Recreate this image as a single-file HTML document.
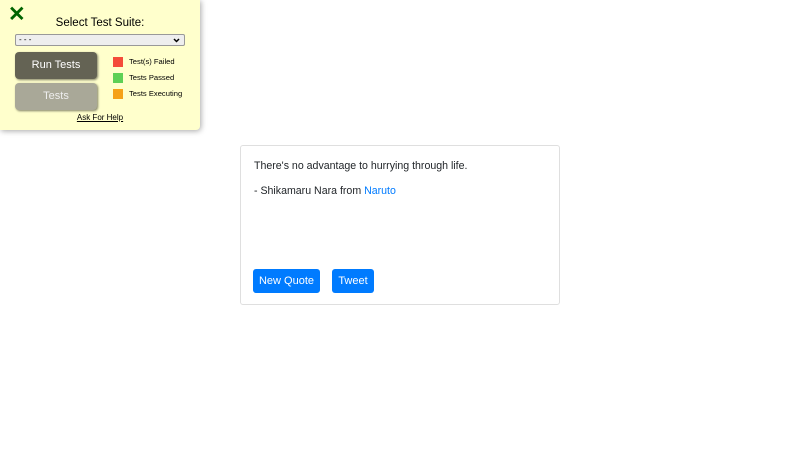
<!DOCTYPE html>
<html><head><meta charset="utf-8"><style>
*{box-sizing:border-box}
body{margin:0;width:800px;height:450px;background:#fff;font-family:"Liberation Sans",sans-serif;position:relative;overflow:hidden}
#panel{position:absolute;left:0;top:0;width:200px;height:130px;background:#ffffcc;box-shadow:1px 1px 6px rgba(0,0,0,.35);border-bottom-right-radius:4px}
.x{position:absolute;left:8px;top:4px;font-size:21px;font-weight:bold;color:#006400;line-height:21px}
.title{position:absolute;left:0;width:200px;top:17px;text-align:center;font-size:11.5px;color:#000}
.sel{position:absolute;left:15px;top:34px;width:170px;height:12px;border:1px solid #999;background:#eee;font-size:8px;line-height:10px;padding-left:3px;border-radius:2px}
.sel svg{position:absolute;right:4px;top:3px}
.btn{position:absolute;left:15px;width:82px;height:27px;border-radius:4px;color:#fff;font-size:11px;text-align:center;line-height:27px;box-shadow:1px 1px 2px rgba(0,0,0,.5)}
.b1{top:52px;background:#646354}
.b2{top:83px;background:#a9a898;color:#eee}
.leg{position:absolute;left:113px;font-size:7.6px;color:#000;line-height:10px}
.leg i{display:inline-block;width:10px;height:10px;vertical-align:middle;margin-right:6px}
.help{position:absolute;left:0;width:200px;top:113px;text-align:center;font-size:8px;text-decoration:underline}
#card{position:absolute;left:240px;top:145px;width:320px;height:160px;border:1px solid #dfdfdf;border-radius:3px;font-family:"Liberation Sans",sans-serif;font-size:10.6px;color:#212529}
#card p{position:absolute;left:13px;margin:0}
a{color:#007bff;text-decoration:none}
.qb{position:absolute;top:123px;height:24px;background:#007bff;color:#fff;border-radius:3px;font-size:11px;line-height:24px;text-align:center}
</style></head><body>
<div id="panel">
<div class="x">✕</div>
<div class="title">Select Test Suite:</div>
<div class="sel">- - -<svg width="7" height="5" viewBox="0 0 7 5"><path d="M1 1L3.5 3.5L6 1" stroke="#000" stroke-width="1.5" fill="none"/></svg></div>
<div class="btn b1">Run Tests</div>
<div class="btn b2">Tests</div>
<div class="leg" style="top:57px"><i style="background:#f44b3a"></i>Test(s) Failed</div>
<div class="leg" style="top:73px"><i style="background:#5ed055"></i>Tests Passed</div>
<div class="leg" style="top:89px"><i style="background:#f5a118"></i>Tests Executing</div>
<div class="help">Ask For Help</div>
</div>
<div id="card">
<p style="top:14px">There's no advantage to hurrying through life.</p>
<p style="top:39px">- Shikamaru Nara from <a>Naruto</a></p>
<div class="qb" style="left:12px;width:67px">New Quote</div>
<div class="qb" style="left:91px;width:42px">Tweet</div>
</div>
</body></html>
